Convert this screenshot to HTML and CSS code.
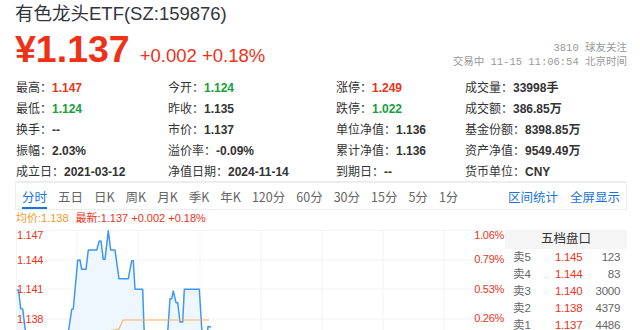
FILE: index.html
```html
<!DOCTYPE html>
<html>
<head>
  <meta charset="utf-8">
  <title>有色龙头ETF(SZ:159876)</title>
  <link rel="stylesheet" href="styles.css">
</head>
<body>
  <div class="page">
    <header class="quote-head">
      <div class="quote-main">
        <h1 class="quote-name">有色龙头ETF(SZ:159876)</h1>
        <div class="quote-price">
          <strong class="price">¥1.137</strong>
          <span class="change">+0.002 +0.18%</span>
        </div>
      </div>
      <div class="quote-meta">
        <div>3810 球友关注</div>
        <div>交易中 11-15 11:06:54 北京时间</div>
      </div>
    </header>

    <div class="quote-stats">
      <div>最高：<b class="up">1.147</b></div>
      <div>今开：<b class="down">1.124</b></div>
      <div>涨停：<b class="up">1.249</b></div>
      <div>成交量：<b>33998手</b></div>

      <div>最低：<b class="down">1.124</b></div>
      <div>昨收：<b>1.135</b></div>
      <div>跌停：<b class="down">1.022</b></div>
      <div>成交额：<b>386.85万</b></div>

      <div>换手：<b>--</b></div>
      <div>市价：<b>1.137</b></div>
      <div>单位净值：<b>1.136</b></div>
      <div>基金份额：<b>8398.85万</b></div>

      <div>振幅：<b>2.03%</b></div>
      <div>溢价率：<b>-0.09%</b></div>
      <div>累计净值：<b>1.136</b></div>
      <div>资产净值：<b>9549.49万</b></div>

      <div>成立日：<b>2021-03-12</b></div>
      <div>净值日期：<b>2024-11-14</b></div>
      <div>到期日：<b>--</b></div>
      <div>货币单位：<b>CNY</b></div>
    </div>

    <nav class="chart-tabs">
      <a class="tab active">分时</a>
      <a class="tab">五日</a>
      <a class="tab">日K</a>
      <a class="tab">周K</a>
      <a class="tab">月K</a>
      <a class="tab">季K</a>
      <a class="tab">年K</a>
      <a class="tab">120分</a>
      <a class="tab">60分</a>
      <a class="tab">30分</a>
      <a class="tab">15分</a>
      <a class="tab">5分</a>
      <a class="tab">1分</a>
      <span class="tab-tools">
        <a class="tool">区间统计</a>
        <a class="tool">全屏显示</a>
      </span>
    </nav>

    <div class="chart-legend">
      <span class="avg">均价:1.138</span>
      <span class="last">最新:1.137 +0.002 +0.18%</span>
    </div>

    <div class="chart-row">
      <div class="chart">
        <svg class="chart-svg" width="489" height="118" viewBox="0 0 489 118">
          <g class="grid">
            <line x1="0" y1="0.5" x2="489" y2="0.5"/>
            <line x1="0" y1="30" x2="489" y2="30"/>
            <line x1="0" y1="59" x2="489" y2="59"/>
            <line x1="0" y1="89" x2="489" y2="89"/>
            <line x1="0.5" y1="0" x2="0.5" y2="118"/>
            <line x1="61" y1="0" x2="61" y2="118"/>
            <line x1="122" y1="0" x2="122" y2="118"/>
            <line x1="184" y1="0" x2="184" y2="118"/>
            <line x1="245" y1="0" x2="245" y2="118"/>
            <line x1="306" y1="0" x2="306" y2="118"/>
            <line x1="367" y1="0" x2="367" y2="118"/>
            <line x1="428" y1="0" x2="428" y2="118"/>
          </g>
          <!-- price area and line -->
          <path class="price-area" d="M0.7,60 L2.5,60 L4.7,78.7 L6.7,79 L9,98 L12,118 L50,118 L53,98 L55.7,79.3 L57.3,79 L61.7,30.3 L64,30 L65.7,39.3 L70,39.3 L72.3,20 L80.7,20 L83.3,11 L85,11 L87.3,29.3 L89,29.3 L92.3,0.8 L94.7,20 L99,20 L103,48.7 L112.3,48.7 L115.7,30.7 L117.3,30.7 L119,59.3 L126.7,59.3 L128,98 L130,118 L150,118 L152,98 L154,68.7 L155.7,68.7 L157.3,61 L160,72.7 L161.7,72.7 L164,92 L166.7,92 L168.3,59.3 L183.3,59.3 L185.7,98 L188,118 L190,118 L192,96.5 L195,97 L195,118 L0.7,118 Z"/>
          <path class="price-line" d="M0.7,60 L2.5,60 L4.7,78.7 L6.7,79 L9,98 L12,118 L50,118 L53,98 L55.7,79.3 L57.3,79 L61.7,30.3 L64,30 L65.7,39.3 L70,39.3 L72.3,20 L80.7,20 L83.3,11 L85,11 L87.3,29.3 L89,29.3 L92.3,0.8 L94.7,20 L99,20 L103,48.7 L112.3,48.7 L115.7,30.7 L117.3,30.7 L119,59.3 L126.7,59.3 L128,98 L130,118 L150,118 L152,98 L154,68.7 L155.7,68.7 L157.3,61 L160,72.7 L161.7,72.7 L164,92 L166.7,92 L168.3,59.3 L183.3,59.3 L185.7,98 L188,118 L190,118 L192,96.5 L195,97"/>
          <path class="avg-line" d="M0,118 L103,99 L107,90 L193,90"/>
          <g class="axis">
            <text x="1" y="9">1.147</text>
            <text x="1" y="34">1.144</text>
            <text x="1" y="63">1.141</text>
            <text x="1" y="93">1.138</text>
            <text class="pct" x="488" y="9">1.06%</text>
            <text class="pct" x="488" y="33">0.79%</text>
            <text class="pct" x="488" y="63">0.53%</text>
            <text class="pct" x="488" y="92">0.26%</text>
          </g>
        </svg>
      </div>

      <aside class="orderbook">
        <div class="ob-title">五档盘口</div>
        <div class="ob-row"><span>卖5</span><span class="up">1.145</span><span class="vol">123</span></div>
        <div class="ob-row"><span>卖4</span><span class="up">1.144</span><span class="vol">83</span></div>
        <div class="ob-row"><span>卖3</span><span class="up">1.140</span><span class="vol">3000</span></div>
        <div class="ob-row"><span>卖2</span><span class="up">1.138</span><span class="vol">4379</span></div>
        <div class="ob-row"><span>卖1</span><span class="up">1.137</span><span class="vol">4486</span></div>
      </aside>
    </div>
  </div>
</body>
</html>
```

FILE: styles.css
```css
body {
  margin: 0;
  background: #fff;
  font-family: "Liberation Sans", "Noto Sans CJK SC", sans-serif;
  color: #333;
  overflow: hidden;
}
.page {
  padding: 0 13px 0 15px;
}
.up {
  color: #ee3218;
}
.down {
  color: #14a03c;
}

/* header */
.quote-head {
  display: flex;
  justify-content: space-between;
  align-items: flex-end;
}
.quote-name {
  margin: 0;
  font-size: 18.5px;
  font-weight: normal;
  line-height: 27px;
  color: #33353c;
}
.quote-price {
  margin-top: 2px;
  height: 40px;
  display: flex;
  align-items: baseline;
  color: #ee3218;
}
.price {
  font-size: 37.5px;
  line-height: 40px;
  font-weight: bold;
}
.change {
  margin-left: 10px;
  font-size: 18.5px;
}
.quote-meta {
  text-align: right;
  font-family: "Liberation Mono", "Noto Sans CJK SC", monospace;
  font-size: 10.5px;
  line-height: 14px;
  color: #999;
}

/* stats */
.quote-stats {
  margin-top: 7px;
  padding-left: 1px;
  display: grid;
  grid-template-columns: 152px 168px 129px 1fr;
  grid-auto-rows: 21px;
  align-items: center;
  font-size: 12px;
  color: #333;
}
.quote-stats b {
  font-weight: bold;
}

/* chart tabs */
.chart-tabs {
  display: flex;
  align-items: flex-start;
  height: 26px;
  padding: 0 6px;
  border: 1px solid #ededed;
  border-top-width: 2px;
  font-family: "Noto Sans CJK SC", sans-serif;
  font-size: 12.5px;
  color: #666;
}
.tab {
  margin-right: 11px;
  padding-top: 3px;
  line-height: 21px;
  border-bottom: 2px solid transparent;
}
.tab.active {
  color: #1a73d9;
  border-bottom-color: #1a73d9;
}
.tab-tools {
  margin-left: auto;
  display: flex;
  gap: 12px;
  padding-top: 3px;
  line-height: 21px;
  color: #1a73d9;
}

.chart-legend {
  display: flex;
  gap: 7px;
  padding-left: 1px;
  margin-bottom: 4px;
  font-size: 11px;
  line-height: 16px;
}
.chart-legend .avg {
  color: #f39a2b;
}
.chart-legend .last {
  color: #ee3218;
}

/* chart */
.chart-row {
  display: flex;
  padding-left: 1px;
}
.chart {
  width: 489px;
  height: 118px;
}
.chart-svg {
  display: block;
}
.grid line {
  stroke: #f3f3f3;
  stroke-width: 1;
}
.price-area {
  fill: #eef6ff;
}
.price-line {
  fill: none;
  stroke: #3d98f4;
  stroke-width: 1.5;
  stroke-linejoin: round;
}
.avg-line {
  fill: none;
  stroke: #f7b262;
  stroke-width: 1.2;
}
.axis text {
  font-family: "Liberation Sans", sans-serif;
  font-size: 11px;
  letter-spacing: -0.3px;
  fill: #e8361e;
}
.axis .pct {
  text-anchor: end;
}

/* order book */
.orderbook {
  width: 122px;
  background: #fff;
  font-size: 12px;
}
.ob-title {
  background: #f5f5f5;
  text-align: center;
  font-size: 12.5px;
  line-height: 19px;
  color: #333;
}
.ob-row {
  display: flex;
  padding: 0 7px 0 8px;
  line-height: 17px;
  font-size: 11.5px;
  color: #666;
}
.ob-row span:first-child {
  width: 42px;
}
.ob-row .up {
  letter-spacing: -0.3px;
}
.ob-row .vol {
  margin-left: auto;
  letter-spacing: -0.3px;
}
```
